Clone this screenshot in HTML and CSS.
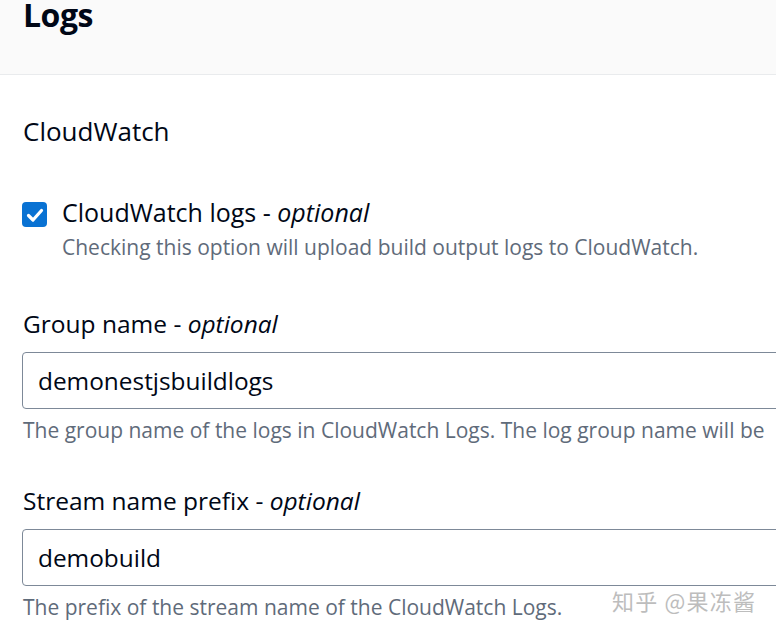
FILE: index.html
```html
<!DOCTYPE html>
<html>
<head>
<meta charset="utf-8">
<link rel="stylesheet" href="styles.css">
</head>
<body>
<div class="page">
  <header class="header">
    <h1 class="title">Logs</h1>
  </header>
  <main class="content">
    <h2 class="section-title">CloudWatch</h2>
    <div class="check-row">
      <span class="checkbox">
        <svg width="24" height="24" viewBox="0 0 24 24"><polyline points="5.5,12.5 10,17 18.5,7.5" fill="none" stroke="#fff" stroke-width="3.2" stroke-linecap="round" stroke-linejoin="round"/></svg>
      </span>
      <div class="check-text">
        <div class="check-label">CloudWatch logs - <i>optional</i></div>
        <div class="check-desc">Checking this option will upload build output logs to CloudWatch.</div>
      </div>
    </div>
    <div class="field field-group">
      <label class="field-label">Group name - <i>optional</i></label>
      <div class="input"><span>demonestjsbuildlogs</span></div>
      <div class="hint">The group name of the logs in CloudWatch Logs. The log group name will be</div>
    </div>
    <div class="field field-stream">
      <label class="field-label">Stream name prefix - <i>optional</i></label>
      <div class="input"><span>demobuild</span></div>
      <div class="hint">The prefix of the stream name of the CloudWatch Logs.</div>
    </div>
  </main>
  <div class="watermark">知乎 @果冻酱</div>
</div>
</body>
</html>
```

FILE: styles.css
```css
html, body {
  margin: 0;
  padding: 0;
  background: #ffffff;
  overflow: hidden;
}
body {
  font-family: "Open Sans", "Noto Sans", sans-serif;
  color: #000716;
}
.page {
  position: relative;
  width: 776px;
  height: 632px;
  overflow: hidden;
}
.header {
  background: #fafafa;
  border-bottom: 1px solid #e9ebed;
  height: 74px;
  padding-left: 23px;
}
.title {
  margin: 0;
  font-size: 32px;
  line-height: 30px;
  font-weight: 700;
  letter-spacing: -0.5px;
}
.content {
  padding-left: 22px;
  width: 900px;
}
.section-title {
  margin: 40px 0 0 1px;
  font-size: 26px;
  line-height: 32px;
  font-weight: 400;
}
.check-row {
  display: flex;
  margin-top: 50px;
  gap: 15px;
}
.checkbox {
  flex: none;
  width: 25px;
  height: 25px;
  margin-top: 5px;
  border-radius: 4px;
  background: #0972d3;
  display: flex;
  align-items: center;
  justify-content: center;
}
.check-label {
  font-size: 25px;
  line-height: 30px;
}
.check-desc {
  margin-top: 7px;
  font-size: 21px;
  line-height: 26px;
  color: #5f6b7a;
}
.field-label {
  display: block;
  margin-left: 1px;
  font-size: 24.5px;
  line-height: 30px;
}
.field-group {
  margin-top: 49px;
}
.field-stream {
  margin-top: 43px;
}
.input {
  margin-top: 13px;
  height: 55px;
  border: 1px solid #7d8998;
  border-radius: 4px;
  display: flex;
  align-items: center;
  padding-left: 15px;
  font-size: 24.4px;
}
.hint {
  margin-top: 8px;
  margin-left: 1px;
  font-size: 21px;
  line-height: 26px;
  color: #5f6b7a;
  white-space: nowrap;
}
.watermark {
  position: absolute;
  left: 612px;
  top: 586px;
  font-family: "Noto Sans CJK SC", sans-serif;
  font-size: 22px;
  line-height: 28px;
  color: #bdbdbd;
  letter-spacing: 1.2px;
}
```
